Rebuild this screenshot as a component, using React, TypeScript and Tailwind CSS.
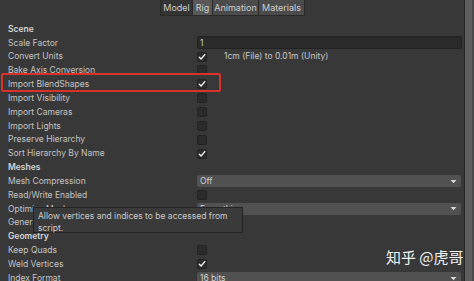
import React from "react";

type Row =
  | { kind: "header"; label: string }
  | { kind: "check"; label: string; checked: boolean; extra?: string }
  | { kind: "field"; label: string; value: string }
  | { kind: "drop"; label: string; value: string };

const rows: Row[] = [
  { kind: "header", label: "Scene" },
  { kind: "field", label: "Scale Factor", value: "1" },
  { kind: "check", label: "Convert Units", checked: true, extra: "1cm (File) to 0.01m (Unity)" },
  { kind: "check", label: "Bake Axis Conversion", checked: false },
  { kind: "check", label: "Import BlendShapes", checked: true },
  { kind: "check", label: "Import Visibility", checked: false },
  { kind: "check", label: "Import Cameras", checked: false },
  { kind: "check", label: "Import Lights", checked: false },
  { kind: "check", label: "Preserve Hierarchy", checked: false },
  { kind: "check", label: "Sort Hierarchy By Name", checked: true },
  { kind: "header", label: "Meshes" },
  { kind: "drop", label: "Mesh Compression", value: "Off" },
  { kind: "check", label: "Read/Write Enabled", checked: false },
  { kind: "drop", label: "Optimize Mesh", value: "Everything" },
  { kind: "check", label: "Generate Colliders", checked: false },
  { kind: "header", label: "Geometry" },
  { kind: "check", label: "Keep Quads", checked: false },
  { kind: "check", label: "Weld Vertices", checked: true },
  { kind: "drop", label: "Index Format", value: "16 bits" },
];

function Check({ checked }: { checked: boolean }) {
  return (
    <div className="w-[10px] h-[10px] rounded-[2px] bg-[#2b2b2b] border border-[#222] flex items-center justify-center">
      {checked && (
        <svg width="8" height="8" viewBox="0 0 8 8">
          <path d="M1.3 4.2 L3.1 6 L6.8 1.6" stroke="#f0f0f0" strokeWidth="1.4" fill="none" strokeLinecap="round" strokeLinejoin="round" />
        </svg>
      )}
    </div>
  );
}

function Drop({ value }: { value: string }) {
  return (
    <div className="w-[264px] h-[12px] rounded-[2px] bg-[#515151] flex items-center justify-between pl-[3px] pr-[4px] text-[#d0d0d0]">
      <span>{value}</span>
      <svg width="7" height="5" viewBox="0 0 7 5">
        <path d="M0.5 1 L6.5 1 L3.5 4.2 Z" fill="#d8d8d8" />
      </svg>
    </div>
  );
}

export default function App() {
  return (
    <div
      className="relative w-[474px] h-[281px] overflow-hidden bg-[#383838] flex text-[8.5px] leading-none text-[#c4c4c4]"
      style={{ fontFamily: "Inter, 'Noto Sans', sans-serif" }}
    >
      <div className="flex-1 flex flex-col">
        <div className="h-[17px] flex pl-[160px] shrink-0">
          <div className="flex h-[16px] border border-t-0 border-[#2a2a2a] text-[#cfcfcf] text-[9px]">
            <div className="w-[32px] bg-[#343434] flex items-center justify-center border-r border-[#2a2a2a]">Model</div>
            <div className="w-[20px] bg-[#585858] flex items-center justify-center border-r border-[#2a2a2a]">Rig</div>
            <div className="w-[46px] bg-[#4b4b4b] flex items-center justify-center border-r border-[#2a2a2a]">Animation</div>
            <div className="w-[45px] bg-[#4b4b4b] flex items-center justify-center">Materials</div>
          </div>
        </div>
        <div className="mt-[5px] flex flex-col">
          {rows.map((r, i) => (
            <div key={i} className="h-[13.85px] flex items-center shrink-0">
              <div
                className={
                  "w-[197px] pl-[8px] whitespace-nowrap " +
                  (r.kind === "header" ? "font-semibold text-[#d6d6d6]" : "")
                }
              >
                {r.label}
              </div>
              {r.kind === "check" && (
                <div className="flex items-center">
                  <Check checked={r.checked} />
                  {r.extra && <span className="ml-[17px] text-[#c8c8c8]">{r.extra}</span>}
                </div>
              )}
              {r.kind === "field" && (
                <div className="w-[265px] h-[13px] rounded-[2px] bg-[#2a2a2a] border border-[#222] flex items-center pl-[2px] text-[#d0d0d0]">
                  {r.value}
                </div>
              )}
              {r.kind === "drop" && <Drop value={r.value} />}
            </div>
          ))}
        </div>
      </div>
      <div className="w-[10px] flex shrink-0">
        <div className="w-[1px] bg-[#262626]" />
        <div className="w-[7px] bg-[#5e5e5e]" />
        <div className="w-[2px] bg-[#4a4a4a]" />
      </div>

      <div className="absolute left-[1px] top-[73px] w-[220px] h-[19px] border-2 border-[#d8312a] rounded-[2px]" />

      <div className="absolute left-[33px] top-[207px] w-[210px] h-[26px] bg-[#3a3a3a] border border-[#242424] pl-[4px] pt-[2px] text-[#cbcbcb] leading-[12px] whitespace-nowrap">
        <div>Allow vertices and indices to be accessed from</div>
        <div>script.</div>
      </div>

      <div
        className="absolute left-[386px] top-[249px] text-[15px] leading-none text-[#f2f2f2] whitespace-nowrap"
        style={{ fontFamily: "'Noto Sans CJK SC', 'Noto Sans', sans-serif" }}
      >
        知乎 @虎哥
      </div>
    </div>
  );
}
